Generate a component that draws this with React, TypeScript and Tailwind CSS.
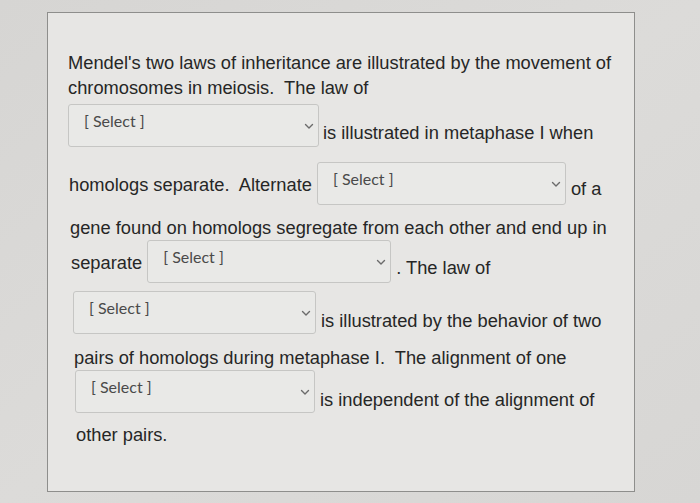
import React from "react";

function Chevron() {
  return (
    <svg width="10" height="7" viewBox="0 0 10 7" className="shrink-0">
      <path d="M1.5 1.5 L5 5 L8.5 1.5" fill="none" stroke="#6b6b6b" strokeWidth="1.4" strokeLinecap="round" strokeLinejoin="round" />
    </svg>
  );
}

function Dropdown({ width }: { width: string }) {
  return (
    <div
      className={`${width} h-[43px] shrink-0 rounded-[3px] border border-[#c6c6c4] bg-[#e9e9e7] flex items-start justify-between pl-[15px] pr-[4px]`}
    >
      <span className="mt-[6px] text-[16px] leading-[20px] text-[#4a4a4a] [font-family:Lato,'Liberation_Sans',sans-serif]">[ Select ]</span>
      <span className="mt-[18px]">
        <Chevron />
      </span>
    </div>
  );
}

export default function App() {
  return (
    <div className="w-[700px] h-[503px] overflow-hidden bg-gradient-to-br from-[#d6d5d3] via-[#dcdbd9] to-[#d7d6d4] [font-family:'Liberation_Sans',Arial,sans-serif] text-[#262626]">
      <div className="pt-[12px] pl-[47px]">
        <div className="w-[588px] h-[480px] border border-[#8e8e8c] bg-[#e7e6e4] pl-[20px] pt-[39px] text-[18.3px] leading-[22px]">
          <p className="h-[22px]">Mendel's two laws of inheritance are illustrated by the movement of</p>
          <p className="mt-[3px] h-[22px]">chromosomes in meiosis.&nbsp; The law of</p>

          <div className="mt-[5px] flex items-start gap-[4px]">
            <Dropdown width="w-[251px]" />
            <span className="mt-[18px]">is illustrated in metaphase I when</span>
          </div>

          <div className="mt-[15px] flex items-start gap-[5px] pl-[1px]">
            <span className="mt-[12px]">homologs separate.&nbsp; Alternate</span>
            <Dropdown width="w-[249px]" />
            <span className="mt-[16px]">of a</span>
          </div>

          <div className="mt-[12px] h-[22px] pl-[2px]">gene found on homologs segregate from each other and end up in</div>

          <div className="mt-[1px] flex items-start gap-[5px] pl-[3px]">
            <span className="mt-[12px]">separate</span>
            <Dropdown width="w-[244px]" />
            <span className="mt-[17px]">. The law of</span>
          </div>

          <div className="mt-[8px] flex items-start gap-[5px] pl-[5px]">
            <Dropdown width="w-[243px]" />
            <span className="mt-[19px]">is illustrated by the behavior of two</span>
          </div>

          <div className="mt-[13px] h-[22px] pl-[6px]">pairs of homologs during metaphase I.&nbsp; The alignment of one</div>

          <div className="mt-[1px] flex items-start gap-[5px] pl-[7px]">
            <Dropdown width="w-[240px]" />
            <span className="mt-[19px]">is independent of the alignment of</span>
          </div>

          <div className="mt-[11px] h-[22px] pl-[8px]">other pairs.</div>
        </div>
      </div>
    </div>
  );
}
